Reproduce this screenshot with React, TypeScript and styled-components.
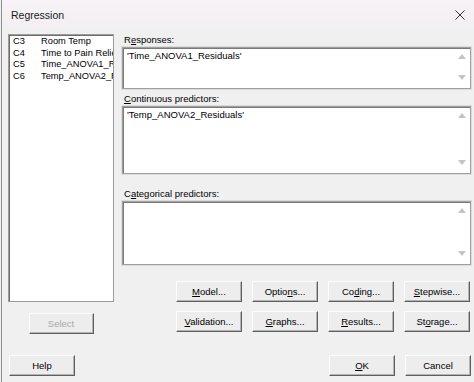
import React from 'react';
import styled, { createGlobalStyle } from 'styled-components';

const GlobalStyle = createGlobalStyle`
  html, body {
    margin: 0;
    padding: 0;
    background: #f0f0f0;
  }
  body {
    font-family: 'Liberation Sans', Arial, sans-serif;
    font-size: 9.5px;
    color: #000;
  }
`;

const columns = [
  { id: 'C3', name: 'Room Temp' },
  { id: 'C4', name: 'Time to Pain Relief' },
  { id: 'C5', name: 'Time_ANOVA1_Residuals' },
  { id: 'C6', name: 'Temp_ANOVA2_Residuals' },
];

const fields = [
  { pre: 'R', key: 'e', post: 'sponses:', value: "'Time_ANOVA1_Residuals'", height: 42, gap: 4 },
  { pre: '', key: 'C', post: 'ontinuous predictors:', value: "'Temp_ANOVA2_Residuals'", height: 68, gap: 14 },
  { pre: 'C', key: 'a', post: 'tegorical predictors:', value: '', height: 64, gap: 0 },
];

const subButtons = [
  ['', 'M', 'odel...'],
  ['Optio', 'n', 's...'],
  ['Co', 'd', 'ing...'],
  ['', 'S', 'tepwise...'],
  ['', 'V', 'alidation...'],
  ['', 'G', 'raphs...'],
  ['', 'R', 'esults...'],
  ['St', 'o', 'rage...'],
];

function Arrow({ up }: { up?: boolean }) {
  return (
    <svg width="8" height="5" viewBox="0 0 8 5">
      <path d={up ? 'M0 5 L4 0 L8 5 Z' : 'M0 0 L4 5 L8 0 Z'} fill="#c4c4c4" />
    </svg>
  );
}

export default function App() {
  return (
    <Dialog>
      <GlobalStyle />
      <TitleBar>
        <Title>Regression</Title>
        <svg width="10" height="10" viewBox="0 0 10 10">
          <path d="M0.5 0.5 L9.5 9.5 M9.5 0.5 L0.5 9.5" stroke="#333" strokeWidth="1" />
        </svg>
      </TitleBar>

      <Body>
        <LeftColumn>
          <VarList>
            {columns.map(c => (
              <VarRow key={c.id}>
                <VarId>{c.id}</VarId>
                <VarName>{c.name}</VarName>
              </VarRow>
            ))}
          </VarList>
          <Button $width={65} disabled>
            Select
          </Button>
        </LeftColumn>

        <RightColumn>
          {fields.map(f => (
            <Field key={f.post} $gap={f.gap}>
              <Label>
                {f.pre}
                <Key>{f.key}</Key>
                {f.post}
              </Label>
              <TextBox $height={f.height}>
                <BoxText>{f.value}</BoxText>
                <ScrollCol>
                  <Arrow up />
                  <Arrow />
                </ScrollCol>
              </TextBox>
            </Field>
          ))}
          <ButtonGrid>
            {subButtons.map(([pre, key, post]) => (
              <Button key={pre + key + post} $width={66}>
                {pre}
                <Key>{key}</Key>
                {post}
              </Button>
            ))}
          </ButtonGrid>
        </RightColumn>
      </Body>

      <Footer>
        <Button $width={66}>Help</Button>
        <FooterRight>
          <Button $width={66}>
            <Key>O</Key>K
          </Button>
          <Button $width={66}>Cancel</Button>
        </FooterRight>
      </Footer>
    </Dialog>
  );
}

const Dialog = styled.div`
  width: 473px;
  height: 382px;
  margin-left: 1px;
  border-left: 1px solid #8f8f8f;
  box-sizing: border-box;
  background: #f0f0f0;
  display: flex;
  flex-direction: column;
  overflow: hidden;
`;

const TitleBar = styled.div`
  height: 29px;
  flex-shrink: 0;
  display: flex;
  align-items: center;
  justify-content: space-between;
  padding: 0 9px 0 9px;
  background: linear-gradient(to bottom, #f7f3f6, #f2eef1);
`;

const Title = styled.span`
  font-size: 10.5px;
  color: #1a1a1a;
`;

const Body = styled.div`
  display: flex;
  gap: 8px;
  padding: 5px 0 0 6px;
`;

const LeftColumn = styled.div`
  display: flex;
  flex-direction: column;
  align-items: center;
  gap: 11px;
  width: 106px;
`;

const VarList = styled.div`
  width: 106px;
  height: 268px;
  box-sizing: border-box;
  background: #fff;
  border: 1px solid #9c9c9c;
  box-shadow: inset 1px 1px 0 #6e6e6e;
  padding: 1px 0 0 4px;
  overflow: hidden;
`;

const VarRow = styled.div`
  display: flex;
  height: 11.7px;
  line-height: 11.7px;
  font-size: 9.3px;
  white-space: nowrap;
`;

const VarId = styled.span`
  width: 28px;
  flex-shrink: 0;
`;

const VarName = styled.span`
  overflow: hidden;
`;

const RightColumn = styled.div`
  display: flex;
  flex-direction: column;
  width: 349px;
`;

const Field = styled.div<{ $gap: number }>`
  display: flex;
  flex-direction: column;
  margin-bottom: ${p => p.$gap}px;
`;

const Label = styled.div`
  height: 12px;
  line-height: 12px;
  margin-bottom: 1px;
  padding-left: 2px;
  font-size: 9.5px;
`;

const Key = styled.span`
  text-decoration: underline;
`;

const TextBox = styled.div<{ $height: number }>`
  height: ${p => p.$height}px;
  box-sizing: border-box;
  background: #fff;
  border: 1px solid #a0a0a0;
  box-shadow: inset 1px 1px 0 #7a7a7a, 0 0 0 1px #dcdcdc;
  display: flex;
`;

const BoxText = styled.div`
  flex: 1;
  padding: 2px 0 0 4px;
  line-height: 12px;
  font-size: 9.5px;
`;

const ScrollCol = styled.div`
  width: 16px;
  display: flex;
  flex-direction: column;
  align-items: center;
  justify-content: space-between;
  padding: 6px 0 8px;
`;

const ButtonGrid = styled.div`
  display: grid;
  grid-template-columns: repeat(4, 66px);
  grid-auto-rows: 21px;
  column-gap: 10px;
  row-gap: 9px;
  justify-content: end;
  margin-top: 16px;
  padding-right: 1px;
`;

const Button = styled.button<{ $width: number }>`
  width: ${p => p.$width}px;
  height: 21px;
  padding: 0;
  font-family: 'Liberation Sans', Arial, sans-serif;
  font-size: 9.5px;
  color: #000;
  background: #ededed;
  border: 1px solid;
  border-color: #fdfdfd #5f5f5f #5f5f5f #fdfdfd;
  box-shadow: inset -1px -1px 0 #b4b4b4;
  border-radius: 0;

  &:disabled {
    color: #a8a8a8;
  }
`;

const Footer = styled.div`
  display: flex;
  justify-content: space-between;
  align-items: flex-start;
  padding: 21px 3px 0 7px;
`;

const FooterRight = styled.div`
  display: flex;
  gap: 10px;
`;
